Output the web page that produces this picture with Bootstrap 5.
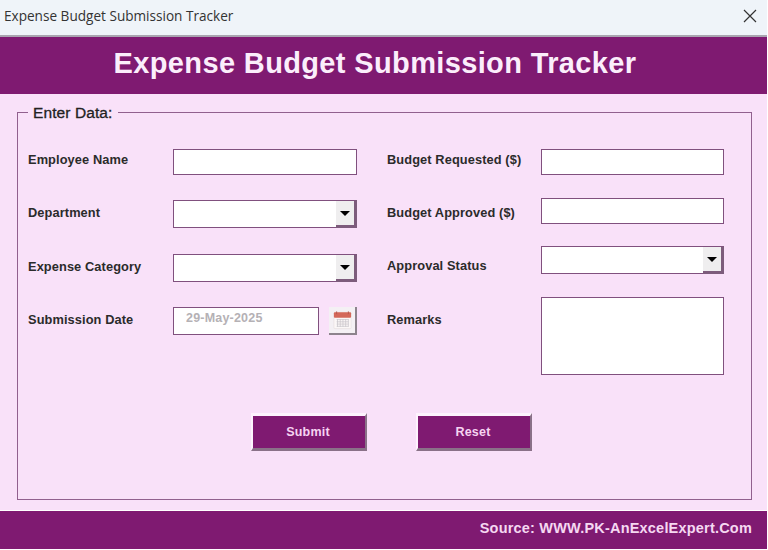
<!DOCTYPE html>
<html lang="en">
<head>
<meta charset="utf-8">
<title>Expense Budget Submission Tracker</title>
<link href="https://cdn.jsdelivr.net/npm/bootstrap@5.3.0/dist/css/bootstrap.min.css" rel="stylesheet">
<style>
html,body{margin:0;background:#fff;overflow:hidden}
body{font-family:"Liberation Sans",Arial,sans-serif;color:#222}
.app-win{width:767px;height:549px}
.title-strip{height:37px;background:#eff4f9;border-bottom:2px solid #a9a5b0;padding:0 11px 3px 4px;font-family:"Open Sans",sans-serif;font-size:13.6px;color:#333}
.close-x{width:14px;height:14px;display:block;margin-right:-1px}
.banner{height:58px;background:#7f1a71;color:#fbeefb;font-weight:700;font-size:29px;letter-spacing:.36px;padding:0 17px 3px 0}
.work{height:416px;background:#f9e1f9;padding:9px 15px 10px 17px}
.data-frame{height:397px;border:1px solid #91608e;margin:0;padding:0 27px 0 10px;min-width:0}
.data-frame legend{float:none;width:auto;margin:0;padding:1px 5px 0;font-size:15.5px;line-height:17px;font-weight:400;color:#222;letter-spacing:.1px;-webkit-text-stroke:.3px #222}
.col-left{width:329px}
.col-right{width:337px;margin-left:30px}
.form-rows{padding-top:28px}
.field-label{font-size:12.8px;font-weight:700;line-height:16px;color:#2b2b2b;margin:0;padding-top:3px;letter-spacing:.1px}
.lab-5{padding-top:5px}
.lab-7{padding-top:7px}
.lab-12{padding-top:12px}
.lab-15{padding-top:15px}
.left-label{width:145px;flex:none}
.right-label{width:154px;flex:none}
.box-input{flex:1 1 auto;min-width:0;background:#fff;border:1px solid #80507e;border-radius:0;padding:0 12px;font-size:13px;box-shadow:none}
.h-26{height:26px}
.h-28{height:28px}
.h-78{height:78px;resize:none}
.drop-group{flex:1 1 auto;flex-wrap:nowrap;width:auto}
.drop-group .box-input{border-right:0;border-radius:0}
.drop-btn{flex:none;width:21px;padding:0;border-radius:0;background:#efeeef;border:1px solid #80507e;border-left:0;border-right:3px solid #7d5c7c;border-bottom:3px solid #7d5c7c;display:flex;align-items:center;justify-content:center}
.drop-btn::after{content:"";border-left:5px solid transparent;border-right:5px solid transparent;border-top:5px solid #000}
.date-input{flex:none;width:146px;color:#b5b1b5;font-weight:700;font-size:12.5px;padding:0 12px 6px;letter-spacing:.2px}
.date-input:disabled{background:#fff;opacity:1}
.cal-btn{width:29px;height:28px;margin-left:10px;padding:0;border-radius:0;border:0;border-right:2px solid #8d838d;border-bottom:2px solid #8d838d;background:#f4f0f4;display:flex;align-items:center;justify-content:center}
.gap-25{margin-bottom:25px}
.gap-26{margin-bottom:26px}
.gap-23{margin-bottom:23px}
.gap-22{margin-bottom:22px}
.action-row{margin:38px 0 0 223px;gap:49px}
.act-btn{width:116px;height:38px;padding:0 2px 0 0;border-radius:0;background:#7f1a71;color:#f6d3f1;font-size:12.5px;font-weight:700;letter-spacing:.2px;border:2px solid;border-width:3px 2px 3px 2px;border-color:#fdf3fd #8a7188 #8a7188 #fdf3fd}
.act-btn:hover{background:#7f1a71;color:#f6d3f1}
.foot-strip{height:38px;background:#7f1a71;color:#f5d8f1;font-weight:700;font-size:14.5px;letter-spacing:.2px;padding:0 15px 2px 0;margin-top:1px}
</style>
</head>
<body>
<div class="app-win d-flex flex-column">
  <div class="title-strip d-flex align-items-center justify-content-between">
    <span>Expense Budget Submission Tracker</span>
    <svg class="close-x" viewBox="0 0 14 14" aria-label="Close"><path d="M1 1 13 13M13 1 1 13" stroke="#333" stroke-width="1.2" fill="none"/></svg>
  </div>
  <div class="banner d-flex align-items-center justify-content-center">Expense Budget Submission Tracker</div>
  <div class="work">
    <fieldset class="data-frame">
      <legend>Enter Data:</legend>
      <div class="d-flex form-rows">
        <div class="col-left">
          <div class="d-flex gap-25">
            <label class="field-label left-label">Employee Name</label>
            <input class="form-control box-input h-26" type="text" aria-label="Employee Name">
          </div>
          <div class="d-flex gap-26">
            <label class="field-label left-label lab-5">Department</label>
            <div class="input-group drop-group h-28">
              <input class="form-control box-input" type="text" aria-label="Department">
              <button class="btn drop-btn" type="button" aria-label="Open"></button>
            </div>
          </div>
          <div class="d-flex gap-25">
            <label class="field-label left-label lab-5">Expense Category</label>
            <div class="input-group drop-group h-28">
              <input class="form-control box-input" type="text" aria-label="Expense Category">
              <button class="btn drop-btn" type="button" aria-label="Open"></button>
            </div>
          </div>
          <div class="d-flex">
            <label class="field-label left-label lab-5">Submission Date</label>
            <input class="form-control box-input date-input h-28" type="text" value="29-May-2025" disabled aria-label="Submission Date">
            <button class="btn cal-btn" type="button" aria-label="Calendar">
              <svg width="19" height="20" viewBox="0 0 21 21"><rect x="1" y="2" width="19" height="18" rx="1" fill="#fbf7f7" stroke="#e3dcdc" stroke-width=".6"/><rect x="1" y="2" width="19" height="6" rx="1" fill="#d4685a"/><path d="M4 1v3M17 1v3" stroke="#b5564b" stroke-width="1"/><path d="M4 10h13M4 12.5h13M4 15h13M4 17.5h13M5 9.5v8.5M8 9.5v8.5M11 9.5v8.5M14 9.5v8.5M17 9.5v8.5" stroke="#c9c5cb" stroke-width=".8" fill="none"/></svg>
            </button>
          </div>
        </div>
        <div class="col-right">
          <div class="d-flex gap-23">
            <label class="field-label right-label">Budget Requested ($)</label>
            <input class="form-control box-input h-26" type="text" aria-label="Budget Requested">
          </div>
          <div class="d-flex gap-22">
            <label class="field-label right-label lab-7">Budget Approved ($)</label>
            <input class="form-control box-input h-26" type="text" aria-label="Budget Approved">
          </div>
          <div class="d-flex gap-23">
            <label class="field-label right-label lab-12">Approval Status</label>
            <div class="input-group drop-group h-28">
              <input class="form-control box-input" type="text" aria-label="Approval Status">
              <button class="btn drop-btn" type="button" aria-label="Open"></button>
            </div>
          </div>
          <div class="d-flex">
            <label class="field-label right-label lab-15">Remarks</label>
            <textarea class="form-control box-input h-78" aria-label="Remarks"></textarea>
          </div>
        </div>
      </div>
      <div class="d-flex action-row">
        <button class="btn act-btn" type="button">Submit</button>
        <button class="btn act-btn" type="button">Reset</button>
      </div>
    </fieldset>
  </div>
  <div class="foot-strip d-flex align-items-center justify-content-end">Source: WWW.PK-AnExcelExpert.Com</div>
</div>
<script src="https://cdn.jsdelivr.net/npm/bootstrap@5.3.0/dist/js/bootstrap.bundle.min.js"></script>
</body>
</html>
